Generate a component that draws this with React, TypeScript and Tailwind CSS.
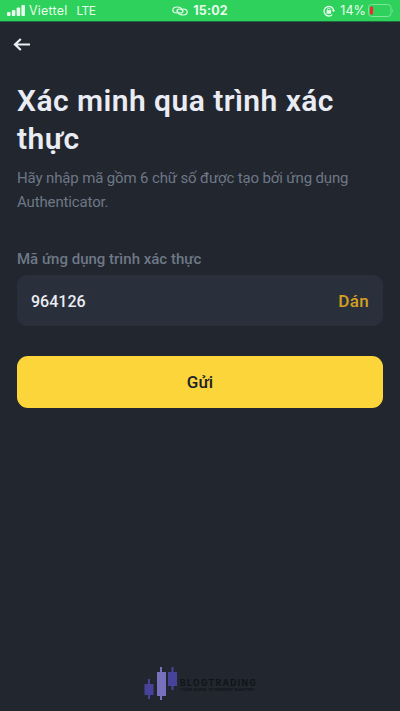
import React from "react";

const StatusBar = () => (
  <header className="grid h-[22px] grid-cols-[1fr_auto_1fr] items-center border-b border-[#1b6b3c] bg-[#2dd15b] font-['Inter',sans-serif] text-[12px] leading-[20px] text-[#e9fbee]">
    <div className="flex items-center pl-[7px]">
      <svg width="18" height="11" viewBox="0 0 18 11" fill="currentColor">
        <rect x="0" y="7" width="3.6" height="4" rx="1" />
        <rect x="4.8" y="5" width="3.6" height="6" rx="1" />
        <rect x="9.6" y="2.5" width="3.6" height="8.5" rx="1" />
        <rect x="14.4" y="0" width="3.6" height="11" rx="1" />
      </svg>
      <span className="ml-1 text-[12.5px] tracking-[0.2px]">Viettel</span>
      <span className="ml-[9px] text-[12px] tracking-[-0.5px]">LTE</span>
    </div>

    <div className="flex items-center gap-[5px]">
      <svg width="16" height="10" viewBox="0 0 16 10" fill="none" stroke="currentColor" strokeWidth="1.2" strokeLinecap="round">
        <path d="M4.6 7C2.4 6.9 0.8 5.7 0.8 4C0.8 2.2 2.6 1 5 1C8.2 1 11 2.8 11 5C11 6.3 10 7 8.7 7C7.2 7 5.8 6.2 5.2 5.2" />
        <path d="M11.4 3C13.6 3.1 15.2 4.3 15.2 6C15.2 7.8 13.4 9 11 9C7.8 9 5 7.2 5 5C5 3.7 6 3 7.3 3C8.8 3 10.2 3.8 10.8 4.8" />
      </svg>
      <span className="text-[12.5px] font-bold tracking-[0.1px]">15:02</span>
    </div>

    <div className="flex items-center justify-end pr-[6px]">
      <svg width="12" height="12" viewBox="0 0 12 12" fill="none" stroke="currentColor" strokeWidth="1.3">
        <path d="M9.3 9.6A4.8 4.8 0 1 1 10.6 5.2" />
        <path d="M8.8 5H12L10.6 7.3Z" fill="currentColor" stroke="none" />
        <rect x="3.5" y="5.2" width="4.6" height="3.5" rx="0.5" fill="currentColor" stroke="none" />
        <path d="M4.5 5.6V4.4A1.3 1.3 0 0 1 7.1 4.4V5.6" strokeWidth="0.9" />
      </svg>
      <span className="ml-[5px] text-[12.5px] tracking-[0.1px]">14%</span>
      <svg className="ml-[2px]" width="26" height="13" viewBox="0 0 26 13" fill="none">
        <rect x="0.5" y="0.5" width="22.5" height="12" rx="3.2" stroke="#81e39c" />
        <rect x="2" y="2.5" width="3" height="8" rx="1" fill="#f9252b" />
        <path d="M24.4 4.5Q26 6.5 24.4 8.5Z" fill="#81e39c" />
      </svg>
    </div>
  </header>
);

const BlogTradingLogo = () => (
  <div className="flex items-start text-[#101318]">
    <svg width="35" height="34" viewBox="0 0 35 34">
      <path d="M5 13V33" stroke="#48439a" strokeWidth="2" />
      <rect x="0.5" y="18" width="9" height="11" fill="#48439a" />
      <path d="M17 1V34" stroke="#7770bd" strokeWidth="2" />
      <rect x="13" y="6" width="9" height="24" fill="#7770bd" />
      <path d="M28.5 1V24" stroke="#48439a" strokeWidth="2" />
      <rect x="24" y="6" width="9" height="14" fill="#48439a" />
    </svg>
    <div className="ml-[1px] mt-[13px] w-[78px] whitespace-nowrap font-['Inter',sans-serif]">
      <p className="text-[8.5px] font-bold leading-[8px] tracking-[1.4px]">BLOGTRADING</p>
      <p className="text-[4px] font-semibold leading-[5px] tracking-[0.2px]">YOUR GUIDE TO MARKET MASTERY</p>
    </div>
  </div>
);

const App = () => {
  return (
    <div className="flex h-[711px] w-[400px] flex-col overflow-hidden bg-[#22262f] font-['Roboto','Noto_Sans',sans-serif]">
      <StatusBar />

      <nav className="flex h-[46px] items-center pl-[13px]">
        <button type="button" aria-label="Back" className="text-[#eceef6]">
          <svg width="17" height="14" viewBox="0 0 17 14" fill="none" stroke="currentColor" strokeWidth="2.2">
            <path d="M2 6.5H17M7.8 1L2 6.5L7.8 12" />
          </svg>
        </button>
      </nav>

      <main className="flex flex-1 flex-col px-[17px] pt-[14px]">
        <h1 className="whitespace-nowrap text-[30px] font-semibold leading-[38px] tracking-[0.45px] text-[#eaecf4]">
          Xác minh qua trình xác
          <br />
          thực
        </h1>
        <p className="mt-[8px] whitespace-nowrap text-[15px] leading-[24px] tracking-[-0.14px] text-[#6e7886]">
          Hãy nhập mã gồm 6 chữ số được tạo bởi ứng dụng
          <br />
          Authenticator.
        </p>

        <label className="mt-[33px] text-[15px] font-medium leading-[24px] text-[#6e7886]">
          <span>Mã ứng dụng trình xác thực</span>
        </label>
        <div className="mt-[4px] flex h-[51px] items-center justify-between rounded-[10px] bg-[#2a303b] px-[14px] pt-[2px]">
          <span className="text-[16px] font-medium text-[#eaecf4]">964126</span>
          <button type="button" className="text-[17px] font-medium tracking-[0.3px] text-[#d3a022]">
            Dán
          </button>
        </div>

        <button
          type="button"
          className="mt-[30px] h-[52px] rounded-[11px] bg-[#fcd53a] pt-px text-[17px] font-medium text-[#1b1f2b]"
        >
          Gửi
        </button>
      </main>

      <footer className="flex h-[45px] pl-[144px]">
        <BlogTradingLogo />
      </footer>
    </div>
  );
};

export default App;
